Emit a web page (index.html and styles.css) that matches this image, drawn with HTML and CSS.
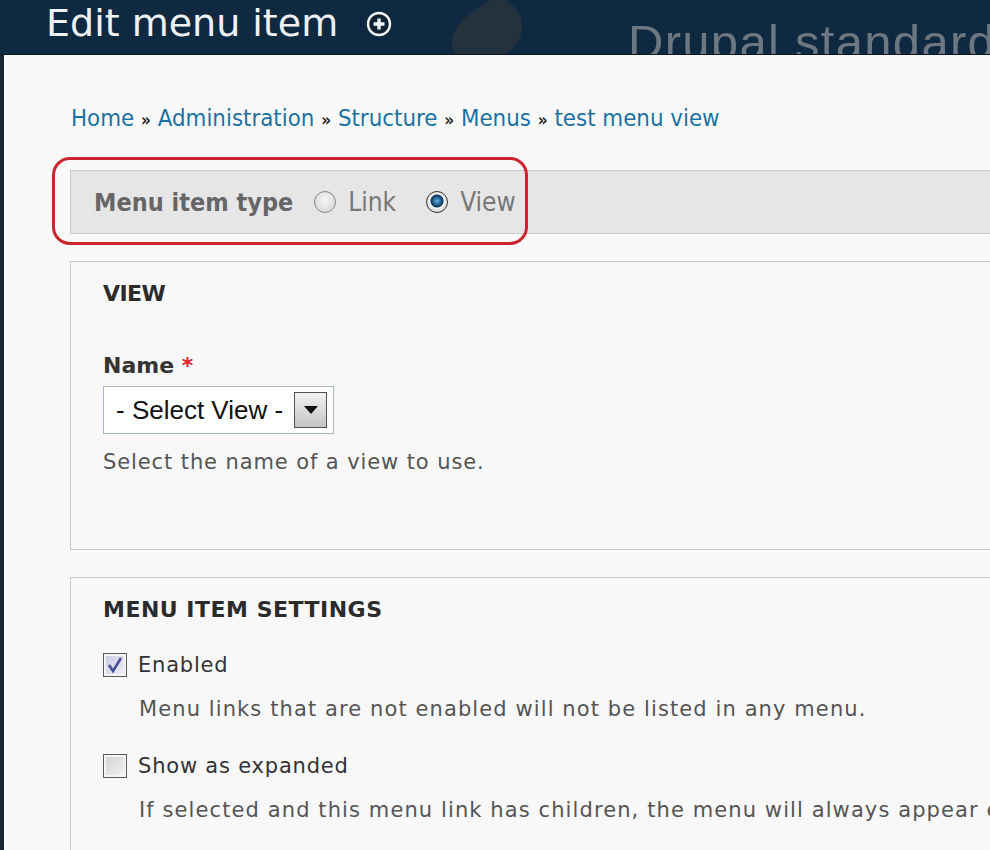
FILE: index.html
```html
<!DOCTYPE html>
<html lang="en">
<head>
    <meta charset="UTF-8">
    <meta name="viewport" content="width=device-width, initial-scale=1.0">
    <title>Edit menu item</title>
    <link rel="stylesheet" href="styles.css">
</head>
<body>
    <header class="site-header">
        <svg class="drop" width="90" height="60" viewBox="0 0 90 60">
            <path d="M58 0 C40 10 14 26 12 44 C10 58 22 64 40 64 C64 64 82 50 82 30 C82 14 70 6 58 0 Z" fill="#24323e"/>
        </svg>
        <h1 class="page-title">Edit menu item
            <svg class="shortcut" width="26" height="26" viewBox="0 0 26 26">
                <circle cx="13" cy="13" r="11" fill="#0f2233" stroke="#f2f4f6" stroke-width="2.4"/>
                <path d="M13 7.5 V18.5 M7.5 13 H18.5" stroke="#f2f4f6" stroke-width="3.4"/>
            </svg>
        </h1>
        <div class="site-name">Drupal standard</div>
    </header>

    <div class="page">
        <nav class="breadcrumb">
            <a href="#">Home</a> <span class="sep">»</span>
            <a href="#">Administration</a> <span class="sep">»</span>
            <a href="#">Structure</a> <span class="sep">»</span>
            <a href="#">Menus</a> <span class="sep">»</span>
            <a href="#">test menu view</a>
        </nav>

        <div class="type-bar">
            <span class="type-label">Menu item type</span>
            <label class="radio"><span class="radio-dot"></span>Link</label>
            <label class="radio checked"><span class="radio-dot"></span>View</label>
            <div class="highlight"></div>
        </div>

        <section class="fieldset view-set">
            <h2 class="legend">VIEW</h2>
            <div class="field-label">Name <span class="required">*</span></div>
            <div class="select">
                <span class="select-text">- Select View -</span>
                <span class="select-button">
                    <svg width="14" height="8" viewBox="0 0 14 8"><path d="M0 0 H14 L7 8 Z" fill="#111"/></svg>
                </span>
            </div>
            <div class="description">Select the name of a view to use.</div>
        </section>

        <section class="fieldset settings-set">
            <h2 class="legend">MENU ITEM SETTINGS</h2>
            <div class="check-row">
                <span class="checkbox checked">
                    <svg width="18" height="18" viewBox="0 0 18 18"><path d="M3 9 L7 15 L15 2" fill="none" stroke="#4a4f9a" stroke-width="2.6"/></svg>
                </span>
                <span class="check-label">Enabled</span>
            </div>
            <div class="description indent">Menu links that are not enabled will not be listed in any menu.</div>
            <div class="check-row second">
                <span class="checkbox"></span>
                <span class="check-label">Show as expanded</span>
            </div>
            <div class="description indent">If selected and this menu link has children, the menu will always appear expanded.</div>
        </section>
    </div>
</body>
</html>
```

FILE: styles.css
```css
body {
    margin: 0;
    background-color: #1c2833;
    font-family: "DejaVu Sans", Verdana, sans-serif;
    overflow: hidden;
}
.site-header {
    position: relative;
    height: 54px;
    background-color: #0f2a40;
    border-bottom: 1px solid #0a1621;
    overflow: hidden;
}
.drop {
    position: absolute;
    left: 440px;
    top: -4px;
}
.page-title {
    position: relative;
    margin: 0;
    padding-left: 46px;
    font-size: 38px;
    font-weight: normal;
    line-height: 46px;
    color: #eef2f4;
    display: flex;
    align-items: center;
}
.shortcut {
    margin-left: 28px;
    margin-top: 2px;
}
.site-name {
    position: absolute;
    left: 628px;
    top: 14px;
    font-family: "Liberation Sans", Arial, sans-serif;
    font-size: 49px;
    letter-spacing: 1.3px;
    color: #6d7781;
    white-space: nowrap;
}
.page {
    margin-left: 4px;
    height: 796px;
    background-color: #f9f9f9;
    padding-top: 50px;
    padding-left: 66px;
    box-sizing: border-box;
}
.breadcrumb {
    font-family: "DejaVu Sans", sans-serif;
    font-stretch: condensed;
    font-size: 23.8px;
    line-height: 26px;
    height: 26px;
    margin-left: 1px;
}
.breadcrumb a {
    color: #1b72a2;
    text-decoration: none;
}
.breadcrumb .sep {
    color: #222;
    font-weight: bold;
    font-size: 17px;
}
.type-bar {
    position: relative;
    margin-top: 39px;
    height: 62px;
    background-color: #e6e6e6;
    border: 1px solid #cdcdcd;
    border-right: none;
    display: flex;
    align-items: center;
    padding-left: 23px;
}
.type-label {
    font-family: "DejaVu Sans", sans-serif;
    font-stretch: condensed;
    font-weight: bold;
    font-size: 25px;
    color: #666;
    margin-right: 21px;
}
.radio {
    display: flex;
    align-items: center;
    font-family: "DejaVu Sans", sans-serif;
    font-stretch: condensed;
    font-size: 26px;
    color: #777;
    margin-right: 30px;
}
.radio-dot {
    width: 22px;
    height: 22px;
    border-radius: 50%;
    border: 1.5px solid #8a8a8a;
    background: radial-gradient(circle at 50% 40%, #f6f6f6, #d0d0d0);
    margin-right: 12px;
    box-sizing: border-box;
}
.radio.checked .radio-dot {
    border: 1.5px solid #333;
    background: radial-gradient(circle at 50% 45%, #6ab3de 0, #1f5f8c 4px, #0f3350 6px, #f4f4f4 7px, #dcdcdc 10px);
}
.highlight {
    position: absolute;
    left: -19px;
    top: -14px;
    width: 476px;
    height: 88px;
    border: 3px solid #c9262f;
    border-radius: 18px;
    box-sizing: border-box;
}
.fieldset {
    margin-top: 27px;
    border: 1px solid #c8c8c8;
    border-right: none;
    background-color: #f8f8f8;
    padding-left: 32px;
    box-sizing: border-box;
}
.view-set {
    height: 289px;
}
.settings-set {
    height: 300px;
}
.legend {
    margin: 0;
    padding-top: 19px;
    font-size: 22px;
    font-weight: bold;
    line-height: 26px;
    color: #2b2b2b;
    letter-spacing: 0.5px;
}
.view-set .legend {
    letter-spacing: -0.6px;
}
.field-label {
    margin-top: 46px;
    font-size: 22px;
    font-weight: bold;
    line-height: 26px;
    color: #333;
}
.required {
    color: #e0202a;
}
.select {
    margin-top: 7px;
    width: 231px;
    height: 48px;
    border: 1px solid #a8b8c8;
    background-color: #fff;
    box-sizing: border-box;
    display: flex;
    align-items: center;
    padding-left: 12px;
}
.select-text {
    font-family: "Liberation Sans", Arial, sans-serif;
    font-size: 26px;
    color: #111;
    width: 178px;
}
.select-button {
    width: 33px;
    height: 36px;
    border: 1px solid #505050;
    box-sizing: border-box;
    background: linear-gradient(#f2f2f2, #c4c4c4);
    display: flex;
    align-items: center;
    justify-content: center;
}
.description {
    margin-top: 15px;
    font-size: 21px;
    line-height: 26px;
    letter-spacing: 0.9px;
    color: #555;
    white-space: nowrap;
}
.description.indent {
    margin-top: 18px;
    margin-left: 36px;
    letter-spacing: 1.1px;
}
.check-row {
    margin-top: 29px;
    display: flex;
    align-items: center;
    height: 26px;
}
.check-row.second {
    margin-top: 31px;
}
.checkbox {
    width: 24px;
    height: 24px;
    border: 1px solid #5a5a5a;
    box-sizing: border-box;
    background: linear-gradient(135deg, #d0d0d4, #f4f4f4);
    box-shadow: inset 0 0 0 2px #f4f4f4;
    display: flex;
    align-items: center;
    justify-content: center;
    margin-right: 11px;
}
.checkbox.checked {
    background: linear-gradient(135deg, #c8c8e0, #f2f2f8);
}
.check-label {
    font-size: 21px;
    letter-spacing: 0.8px;
    color: #333;
}
```
